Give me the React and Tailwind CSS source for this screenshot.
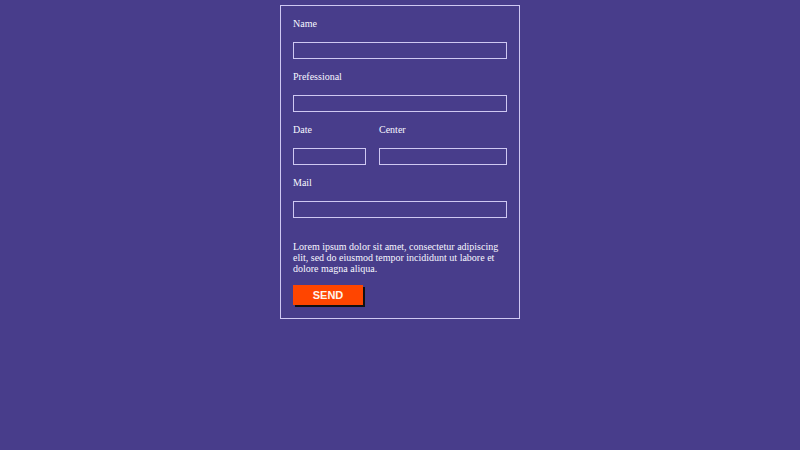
export default function App() {
  return (
    <div className="min-h-[450px] bg-[#483d8b] pt-[5px] font-['Liberation_Serif',serif] text-[10px] leading-[12px] text-[#f7f7ff]">
      <form className="mx-auto w-[240px] border border-[#cfc8f2] px-3 pt-3 pb-[13px]">
        {/* Name */}
        <label className="block">Name</label>
        <input className="mt-3 block h-[17px] w-full border border-[#cfc8f2] bg-transparent outline-none" />

        {/* Professional */}
        <label className="mt-3 block">Prefessional</label>
        <input className="mt-3 block h-[17px] w-full border border-[#cfc8f2] bg-transparent outline-none" />

        {/* Date / Center */}
        <div className="mt-3 grid grid-cols-[73px_1fr] gap-x-[13px]">
          <div>
            <label className="block">Date</label>
            <input className="mt-3 block h-[17px] w-full border border-[#cfc8f2] bg-transparent outline-none" />
          </div>
          <div>
            <label className="block">Center</label>
            <input className="mt-3 block h-[17px] w-full border border-[#cfc8f2] bg-transparent outline-none" />
          </div>
        </div>

        {/* Mail */}
        <label className="mt-3 block">Mail</label>
        <input className="mt-3 block h-[17px] w-full border border-[#cfc8f2] bg-transparent outline-none" />

        <p className="mt-[23px] leading-[11px]">
          Lorem ipsum dolor sit amet, consectetur adipiscing elit, sed do eiusmod tempor incididunt ut labore et dolore magna aliqua.
        </p>

        <button
          type="button"
          className="mt-[11px] block h-5 w-[70px] bg-[#ff4500] font-['Liberation_Sans',sans-serif] text-[11px] font-bold text-[#fff3ea] shadow-[2px_2px_0_#111]"
        >
          SEND
        </button>
      </form>
    </div>
  );
}
